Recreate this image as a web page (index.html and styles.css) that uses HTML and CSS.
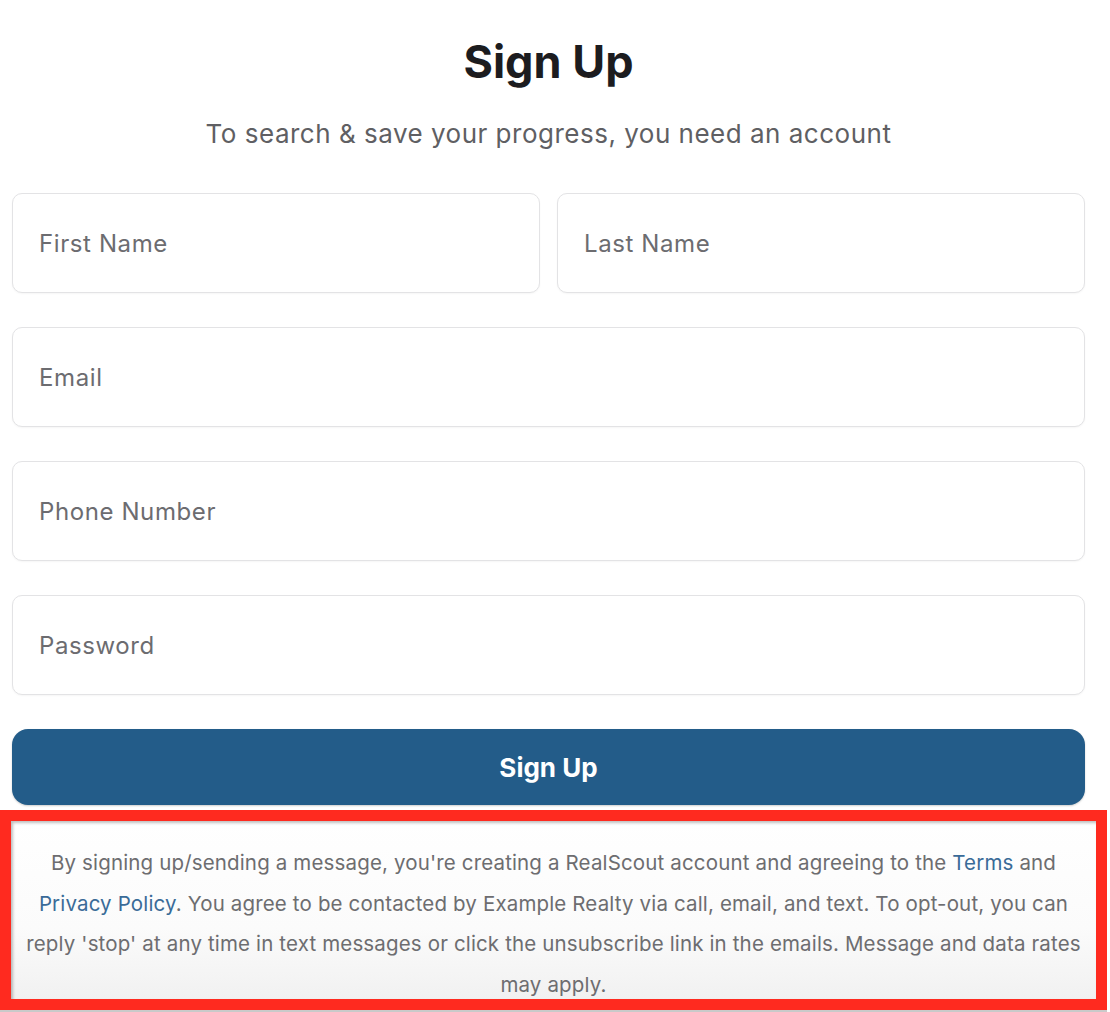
FILE: index.html
```html
<!DOCTYPE html>
<html lang="en">
<head>
<meta charset="utf-8">
<title>Sign Up</title>
<link rel="stylesheet" href="styles.css">
</head>
<body>
<main class="page">
  <section class="signup">
    <h1 class="title">Sign Up</h1>
    <p class="subtitle">To search &amp; save your progress, you need an account</p>
    <form class="form">
      <div class="row two">
        <input class="field" type="text" placeholder="First Name">
        <input class="field" type="text" placeholder="Last Name">
      </div>
      <input class="field" type="email" placeholder="Email">
      <input class="field" type="tel" placeholder="Phone Number">
      <input class="field" type="password" placeholder="Password">
      <button class="submit" type="button">Sign Up</button>
    </form>
  </section>
  <section class="legal">
    <p class="legal-text">By signing up/sending a message, you're creating a RealScout account and agreeing to the <a href="#" class="link">Terms</a> and <a href="#" class="link">Privacy Policy</a>. You agree to be contacted by Example Realty via call, email, and text. To opt-out, you can reply 'stop' at any time in text messages or click the unsubscribe link in the emails. Message and data rates may apply.</p>
  </section>
</main>
</body>
</html>
```

FILE: styles.css
```css
* { box-sizing: border-box; }
html, body {
  margin: 0;
  padding: 0;
  background: #ffffff;
}
body {
  font-family: Inter, "Noto Sans", "Liberation Sans", sans-serif;
  color: #1c1c1f;
  width: 1110px;
  height: 1012px;
  overflow: hidden;
}
.page {
  display: flex;
  flex-direction: column;
}
.signup {
  padding: 0 25px 0 12px;
  display: flex;
  flex-direction: column;
  align-items: stretch;
}
.title {
  margin: 34px 0 0;
  font-size: 45px;
  line-height: 56px;
  font-weight: 700;
  text-align: center;
  letter-spacing: 0;
  color: #1c1c1f;
}
.subtitle {
  margin: 28px 0 0;
  font-size: 26px;
  line-height: 32px;
  letter-spacing: 0.5px;
  text-align: center;
  color: #5f5f63;
}
.form {
  margin-top: 43px;
  display: flex;
  flex-direction: column;
  gap: 34px;
}
.row.two {
  display: grid;
  grid-template-columns: 1fr 1fr;
  gap: 17px;
}
.field {
  display: block;
  width: 100%;
  height: 100px;
  border: 1.5px solid #e3e3e5;
  border-radius: 10px;
  padding: 0 26px;
  font-family: inherit;
  font-size: 24px;
  letter-spacing: 0.6px;
  color: #333;
  background: #fff;
  box-shadow: 0 1px 2px rgba(0,0,0,0.04);
  outline: none;
}
.field::placeholder {
  color: #6c6c70;
}
.submit {
  height: 76px;
  border: none;
  border-radius: 16px;
  background: #235c89;
  color: #ffffff;
  font-family: inherit;
  font-size: 26px;
  font-weight: 700;
  box-shadow: 0 1px 2px rgba(0,0,0,0.2);
  cursor: pointer;
}
.legal {
  margin-top: 5px;
  width: 1107px;
  height: 200px;
  border: 11px solid #ff2a1f;
  background: linear-gradient(#ffffff 0%, #fbfbfb 60%, #f1f1f1 100%);
  box-shadow: inset 2px 2px 3px rgba(0,0,0,0.25), 0 2px 0 #c9c9c9;
  overflow: hidden;
}
.legal-text {
  margin: 0;
  padding: 22px 10px 0;
  font-size: 20.5px;
  line-height: 40.5px;
  letter-spacing: 0.15px;
  text-align: center;
  color: #6d6d70;
}
.link {
  color: #3a6b98;
  text-decoration: none;
}
```
